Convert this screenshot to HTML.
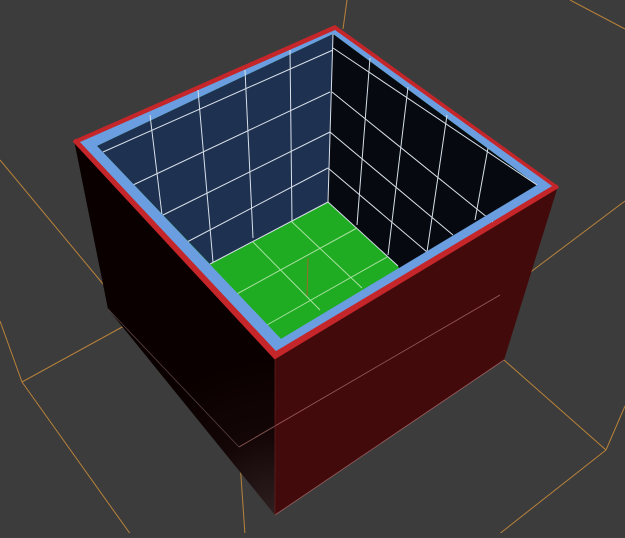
<!DOCTYPE html>
<html><head><meta charset="utf-8"><style>html,body{margin:0;padding:0;background:#3c3c3c;overflow:hidden}</style></head>
<body>
<svg width="625" height="533" viewBox="0 0 625 533" xmlns="http://www.w3.org/2000/svg">
<defs>
<radialGradient id="lf" cx="275" cy="515" r="160" gradientUnits="userSpaceOnUse">
<stop offset="0" stop-color="#2e2020"/><stop offset="0.5" stop-color="#140606"/><stop offset="1" stop-color="#0a0000"/>
</radialGradient>
</defs>
<rect width="625" height="533" fill="#3c3c3c"/>
<g stroke="#b8823a" stroke-width="1" fill="none">
<line x1="347" y1="0" x2="343" y2="29"/>
<line x1="570" y1="0" x2="625" y2="29"/>
<line x1="0" y1="160" x2="108" y2="290"/>
<line x1="22" y1="382" x2="124" y2="326"/>
<line x1="22" y1="382" x2="131" y2="535"/>
<line x1="0" y1="321" x2="22" y2="382"/>
<line x1="239" y1="447" x2="245" y2="535"/>
<line x1="504" y1="360" x2="606" y2="450"/>
<line x1="606" y1="450" x2="625" y2="406"/>
<line x1="606" y1="450" x2="498" y2="535"/>
<line x1="500" y1="295" x2="625" y2="201"/>
</g>
<polygon points="74,140 275,357 275,515 108,309" fill="url(#lf)"/>
<polygon points="275,357 558,186 504,360 275,515" fill="#430a0b"/>
<g stroke="#b07070" stroke-width="0.8" fill="none" opacity="0.8">
<line x1="239" y1="447" x2="500" y2="295"/>
<line x1="108" y1="309" x2="239" y2="447" stroke="#6a5050"/>
<line x1="275" y1="515" x2="504" y2="360"/>
<line x1="275" y1="357" x2="275" y2="515" stroke="#702020"/>
</g>
<polygon points="74,140 335,25 558,186 275,357" fill="#c4262a"/>
<polygon points="80,142 335,30 552,186 276,351" fill="#6a9ee0"/>
<polygon points="97,146 333,34 537,185 281,339" fill="#1fac22"/>
<polygon points="97,146 333,34 328,202 210,264" fill="#1e3150"/>
<polygon points="333,34 537,185 545,190 402,274 398,266 328,202" fill="#060a10"/>
<g stroke="#d8e0ea" stroke-width="1" fill="none">
<line x1="150" y1="115" x2="162" y2="215"/>
<line x1="198" y1="90" x2="213" y2="262"/>
<line x1="245" y1="70" x2="253" y2="238"/>
<line x1="290" y1="50" x2="292" y2="222"/>
<line x1="333" y1="50" x2="103" y2="152"/>
<line x1="330" y1="92" x2="133" y2="185"/>
<line x1="330" y1="132" x2="163" y2="215"/>
<line x1="328" y1="168" x2="187" y2="242"/>
<line x1="370" y1="58" x2="357" y2="225"/>
<line x1="408" y1="87" x2="388" y2="255"/>
<line x1="447" y1="115" x2="427" y2="252"/>
<line x1="488" y1="148" x2="475" y2="220"/>
<line x1="333" y1="48" x2="537" y2="185"/>
<line x1="332" y1="92" x2="493" y2="222"/>
<line x1="330" y1="132" x2="453" y2="235"/>
<line x1="328" y1="168" x2="427" y2="252"/>
<line x1="333" y1="34" x2="328" y2="202"/>
<line x1="328" y1="202" x2="398" y2="266"/>
<line x1="328" y1="202" x2="210" y2="264"/>
</g>
<g stroke="#a8e0a0" stroke-width="1" fill="none">
<line x1="253" y1="242" x2="320" y2="310"/>
<line x1="292" y1="222" x2="362" y2="288"/>
<line x1="357" y1="228" x2="235" y2="295"/>
<line x1="387" y1="257" x2="267" y2="325"/>
</g>
<line x1="308" y1="258" x2="307" y2="296" stroke="#9a6a30" stroke-width="1"/>
<polygon points="97,146 281,339 537,185 552,186 276,351 80,142" fill="#6a9ee0"/>
<polyline points="74,140 275,357 558,186" fill="none" stroke="#c4262a" stroke-width="4"/>
</svg>
</body></html>
